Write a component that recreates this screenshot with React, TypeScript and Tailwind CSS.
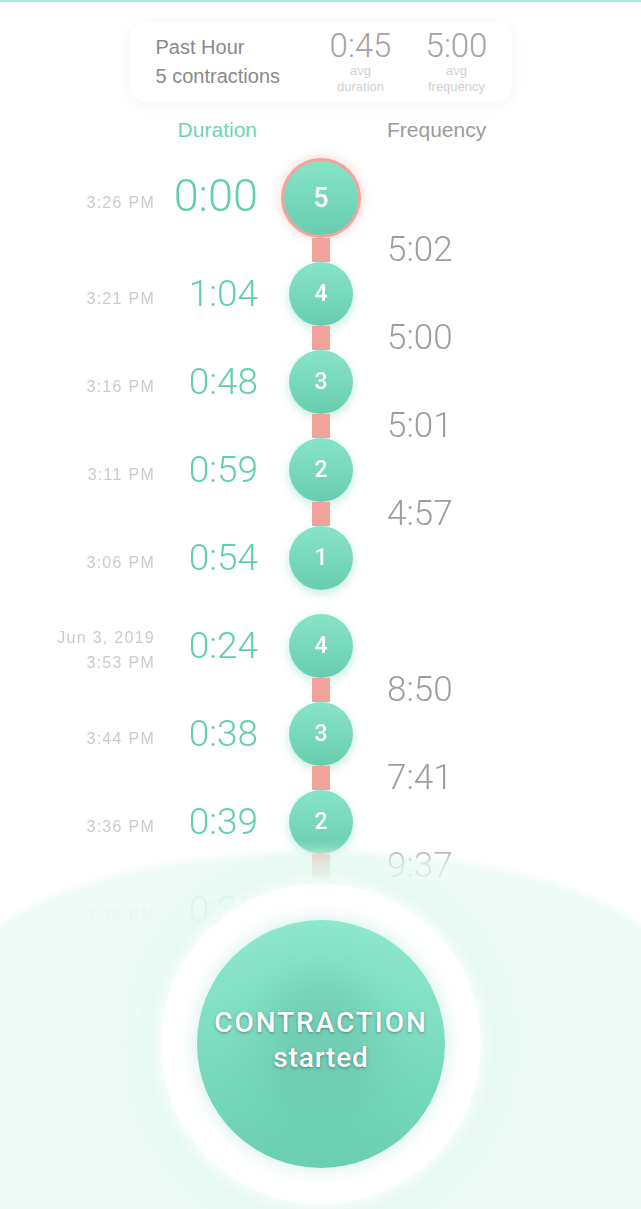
import React from 'react'

type Row = {
  date?: string
  time: string
  dur: string
  n: number
  big?: boolean
  top: boolean
  bottom: boolean
}

const rows: Row[] = [
  { time: '3:26 PM', dur: '0:00', n: 5, big: true, top: false, bottom: true },
  { time: '3:21 PM', dur: '1:04', n: 4, top: true, bottom: true },
  { time: '3:16 PM', dur: '0:48', n: 3, top: true, bottom: true },
  { time: '3:11 PM', dur: '0:59', n: 2, top: true, bottom: true },
  { time: '3:06 PM', dur: '0:54', n: 1, top: true, bottom: false },
  { date: 'Jun 3, 2019', time: '3:53 PM', dur: '0:24', n: 4, top: false, bottom: true },
  { time: '3:44 PM', dur: '0:38', n: 3, top: true, bottom: true },
  { time: '3:36 PM', dur: '0:39', n: 2, top: true, bottom: true },
  { time: '3:35 PM', dur: '0:35', n: 1, top: true, bottom: false },
]

const freqs = ['5:02', '5:00', '5:01', '4:57', '', '8:50', '7:41', '9:37']

const label = "font-['Liberation_Sans',Arial,sans-serif]"
const digits = "font-['Roboto','Liberation_Sans',sans-serif] font-light"

function Node({ row }: { row: Row }) {
  const link = 'w-[18px] flex-1 bg-[#f2a39b]'
  const num = "font-['Roboto',sans-serif] font-medium text-white flex items-center justify-center"
  return (
    <div className="w-[80px] h-full flex flex-col items-center">
      <div className={row.top ? link : 'flex-1'} />
      {row.big ? (
        <div className="w-[80px] h-[80px] shrink-0 rounded-full bg-[#f2a39b] p-[3px] shadow-[0_0_12px_rgba(242,140,130,0.4)]">
          <div className={`${num} w-full h-full rounded-full bg-gradient-to-b from-[#86e3c7] to-[#68cdb0] text-[27px]`}>
            {row.n}
          </div>
        </div>
      ) : (
        <div className={`${num} w-[64px] h-[64px] shrink-0 rounded-full bg-gradient-to-b from-[#88e4c8] to-[#67cdaf] shadow-[0_4px_10px_rgba(90,200,165,0.35)] text-[23px]`}>
          {row.n}
        </div>
      )}
      <div className={row.bottom ? link : 'flex-1'} />
    </div>
  )
}

export default function App() {
  return (
    <div className={`${label} relative w-full h-[1209px] overflow-hidden bg-white border-t-2 border-[#a8e9d9]`}>
      {/* Summary card */}
      <div className="mx-auto mt-[20px] w-[382px] h-[80px] rounded-2xl bg-white shadow-[0_2px_16px_rgba(0,0,0,0.05)] flex items-center pl-[26px]">
        <div className="w-[172px] text-[#8a8a8a] text-[20px] leading-[29px]">
          <div>Past Hour</div>
          <div>5 contractions</div>
        </div>
        <div className="w-[66px] flex flex-col items-center">
          <div className={`${digits} text-[#a3a3a3] text-[33px] leading-[34px]`}>0:45</div>
          <div className="text-[#d0d0d0] text-[13px] leading-[16px] text-center">avg<br />duration</div>
        </div>
        <div className="ml-[30px] w-[66px] flex flex-col items-center">
          <div className={`${digits} text-[#a3a3a3] text-[33px] leading-[34px]`}>5:00</div>
          <div className="text-[#d0d0d0] text-[13px] leading-[16px] text-center">avg<br />frequency</div>
        </div>
      </div>

      {/* Column headers */}
      <div className="flex mt-[14px] h-[28px] text-[21px] leading-[28px]">
        <div className="w-[257px] text-right text-[#6fd4b6]">Duration</div>
        <div className="ml-[130px] text-[#9b9b9b]">Frequency</div>
      </div>

      {/* Timeline */}
      <div className="flex mt-[2px] [mask-image:linear-gradient(to_bottom,black_0,black_694px,rgba(0,0,0,0.35)_722px,rgba(0,0,0,0.18)_766px,transparent_815px)]">
        <div className="flex flex-col">
          {rows.map((row, i) => (
            <div key={i} className={`flex items-center ${row.big ? 'h-[104px]' : 'h-[88px]'}`}>
              <div className="w-[155px] text-right text-[#cbcbcb] text-[16px] tracking-[0.08em] leading-[25px] pt-[8px]">
                {row.date && <div>{row.date}</div>}
                <div>{row.time}</div>
              </div>
              <div
                className={`${digits} w-[103px] text-right text-[#62cfae] ${
                  row.big ? 'text-[45px] pb-[4px]' : 'text-[37px]'
                }`}
              >
                {row.dur}
              </div>
              <div className="ml-[23px] h-full">
                <Node row={row} />
              </div>
            </div>
          ))}
        </div>
        <div className="ml-[26px] flex flex-col pt-[60px]">
          {freqs.map((f, i) => (
            <div key={i} className={`${digits} h-[88px] flex items-center text-[#9e9e9e] text-[35px]`}>
              {f}
            </div>
          ))}
        </div>
      </div>

      {/* Bottom mint panel */}
      <div className="absolute left-[-29px] top-[850px] w-[700px] h-[400px] bg-[#d9f6ee]/45 blur-[3px] [border-top-left-radius:350px_125px] [border-top-right-radius:350px_125px]" />

      {/* Start button */}
      <div className="absolute left-[161px] top-[882px] w-[320px] h-[320px] rounded-full bg-white shadow-[0_0_14px_6px_rgba(255,255,255,0.9),0_0_40px_rgba(150,230,205,0.45)] flex items-center justify-center">
        <div className="relative w-[248px] h-[248px] rounded-full bg-gradient-to-b from-[#8ee8ce] to-[#6acfb2] shadow-[0_0_18px_rgba(110,210,180,0.35)] flex items-center justify-center overflow-hidden">
          <div className="absolute w-[110px] h-[150px] rounded-full bg-[#5fb9a0] opacity-40 blur-[22px]" />
          <div className="relative text-center text-white font-['Roboto',sans-serif] font-medium text-[28px] tracking-[0.07em] leading-[35px] [text-shadow:0_1px_3px_rgba(0,0,0,0.35)] -mt-[8px]">
            <div>CONTRACTION</div>
            <div className="tracking-[0.03em]">started</div>
          </div>
        </div>
      </div>
    </div>
  )
}
